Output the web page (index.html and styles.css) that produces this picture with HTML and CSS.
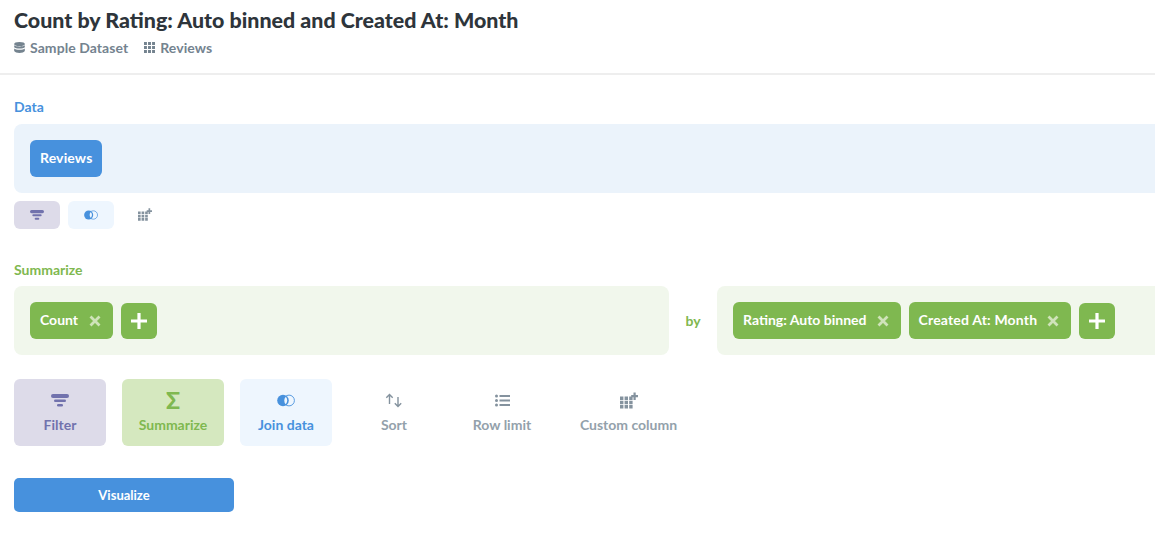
FILE: index.html
```html
<!DOCTYPE html>
<html>
<head>
<meta charset="utf-8">
<title>Count by Rating</title>
<link rel="stylesheet" href="styles.css">
</head>
<body>
<svg class="defs" width="0" height="0">
  <defs>
    <symbol id="funnel" viewBox="0 0 18 14"><rect x="0" y="0" width="18" height="4" rx="2"/><rect x="3" y="5.5" width="12" height="2.6" rx="1.3"/><rect x="6" y="10" width="6" height="2.6" rx="1.3"/></symbol>
    <symbol id="join" viewBox="0 0 18 12"><circle cx="12" cy="6" r="5.400" fill="none" stroke="#4791dd" stroke-width=".9"/><circle cx="6" cy="6" r="5.800" fill="#4791dd"/><path d="M8.800 2.300a5.200 5.200 0 0 0 0 7.400a6 6 0 0 0 0-7.400z" fill="#eef6fe"/></symbol>
    <symbol id="grid" viewBox="0 0 12 12"><path d="M0 0h3.2v3.2H0zM4.4 0h3.2v3.2H4.4zM8.8 0H12v3.2H8.8zM0 4.4h3.2v3.2H0zM4.4 4.4h3.2v3.2H4.4zM8.8 4.4H12v3.2H8.8zM0 8.8h3.2V12H0zM4.4 8.8h3.2V12H4.4zM8.8 8.8H12V12H8.8z"/></symbol>
    <symbol id="gridplus" viewBox="0 0 18 16"><path d="M0 4h3.4v3.4H0zM4.6 4H8v3.4H4.6zM9.2 4h3.4v3.4H9.2zM0 8.3h3.4v3.4H0zM4.6 8.3H8v3.4H4.6zM9.2 8.3h3.4v3.4H9.2zM0 12.6h3.4V16H0zM4.6 12.6H8V16H4.6zM9.2 12.6h3.4V16H9.2z"/><path d="M13.500 0h2.200v2.600h2.300v2.200h-2.300v2.600h-2.200V4.800h-2.300V2.600h2.300z"/></symbol>
    <symbol id="x" viewBox="0 0 12 12"><path d="M1.500 1.500l9 9M10.500 1.500l-9 9" fill="none" stroke="currentColor" stroke-width="2.800"/></symbol>
    <symbol id="plus" viewBox="0 0 16 16"><path d="M6.400 0h3.200v6.400H16v3.200H9.600V16H6.400V9.600H0V6.400h6.400z"/></symbol>
  </defs>
</svg>

<header class="head">
  <h1 class="title">Count by Rating: Auto binned and Created At: Month</h1>
  <div class="crumbs">
    <span class="crumb">
      <svg class="ico-db" viewBox="0 0 12 12"><ellipse cx="6" cy="2.200" rx="5.800" ry="2.200"/><path d="M.2 3.600C1.500 5.300 10.500 5.300 11.800 3.600V5.800C10.500 7.600 1.500 7.600.2 5.800zM.2 7.200C1.500 9 10.500 9 11.800 7.200V9.800C10.500 12.600 1.500 12.600.2 9.800z"/></svg>
      Sample Dataset
    </span>
    <span class="crumb">
      <svg class="ico-grid"><use href="#grid"/></svg>
      Reviews
    </span>
  </div>
</header>

<main class="main">
  <section class="section">
    <div class="label label-blue">Data</div>
    <div class="box box-blue box-bleed">
      <span class="chip chip-blue chip-source">Reviews</span>
    </div>
    <div class="mini-row">
      <span class="mini mini-purple"><svg class="mini-funnel"><use href="#funnel"/></svg></span>
      <span class="mini mini-blue"><svg class="mini-join"><use href="#join"/></svg></span>
      <span class="mini mini-plain"><svg class="mini-grid"><use href="#gridplus"/></svg></span>
    </div>
  </section>

  <section class="section section-sum">
    <div class="label label-green">Summarize</div>
    <div class="sum-row">
      <div class="box box-green box-left">
        <span class="chip chip-green">Count<svg class="x"><use href="#x"/></svg></span>
        <span class="add"><svg class="plus"><use href="#plus"/></svg></span>
      </div>
      <span class="by">by</span>
      <div class="box box-green box-right">
        <span class="chip chip-green">Rating: Auto binned<svg class="x"><use href="#x"/></svg></span>
        <span class="chip chip-green chip-created">Created At: Month<svg class="x"><use href="#x"/></svg></span>
        <span class="add"><svg class="plus"><use href="#plus"/></svg></span>
      </div>
    </div>
  </section>

  <div class="actions">
    <div class="action action-purple action-filter"><svg class="a-funnel"><use href="#funnel"/></svg><span>Filter</span></div>
    <div class="action action-green action-sum"><span class="sigma">Σ</span><span>Summarize</span></div>
    <div class="action action-blue action-join"><svg class="a-join"><use href="#join"/></svg><span>Join data</span></div>
    <div class="action action-plain action-sort">
      <svg class="a-sort" viewBox="0 0 18 15"><path d="M4.500 11V1.500M1.300 4.700l3.200-3.200l3.200 3.200M13 4V13.500M9.800 10.300l3.200 3.200l3.200-3.200" fill="none" stroke="currentColor" stroke-width="1.400"/></svg>
      <span>Sort</span>
    </div>
    <div class="action action-plain action-limit">
      <svg class="a-list" viewBox="0 0 15 12"><circle cx="1.500" cy="1.500" r="1.500"/><circle cx="1.500" cy="6" r="1.500"/><circle cx="1.500" cy="10.500" r="1.500"/><path d="M4.500.6H15v1.800H4.500zM4.500 5.100H15v1.800H4.500zM4.500 9.600H15v1.800H4.500z"/></svg>
      <span>Row limit</span>
    </div>
    <div class="action action-plain action-custom"><svg class="a-gridplus"><use href="#gridplus"/></svg><span>Custom column</span></div>
  </div>

  <button class="visualize">Visualize</button>
</main>
</body>
</html>
```

FILE: styles.css
```css
* { box-sizing: border-box; }
html, body { margin: 0; height: 100%; overflow: hidden; }
body { background: #fff; font-family: Lato, sans-serif; color: #2e353b; }
.defs { position: absolute; }

.head { height: 75px; padding: 8px 14px 0; border-bottom: 2px solid #eeeeee; }
.title { margin: 0; font-size: 21.4px; line-height: 24px; font-weight: 900; color: #2e353b; }
.crumbs { display: flex; gap: 16px; margin-top: 7px; font-size: 14px; line-height: 17px; font-weight: 700; letter-spacing: .07px; color: #74838f; }
.crumb { display: inline-flex; align-items: center; gap: 5px; }
.ico-db, .ico-grid { width: 11px; height: 11px; fill: #74838f; }

.main { padding: 23px 14px 0; }
.label { font-size: 14px; line-height: 17px; font-weight: 700; }
.label-blue { color: #4791dd; margin-bottom: 9px; }
.label-green { color: #7fb850; margin-bottom: 8px; }

.box { display: flex; gap: 8px; height: 69px; padding: 16px; border-radius: 8px; align-items: flex-start; }
.box-blue { background: #ebf3fb; }
.box-green { background: #f1f7ec; }
.box-bleed { margin-right: -40px; }

.chip { display: inline-flex; align-items: center; height: 37px; padding: 0 12px 2px 10px; border-radius: 6px; color: #fff; font-size: 14px; font-weight: 700; white-space: nowrap; }
.chip-blue { background: #4791dd; }
.chip-green { background: #7fb850; }
.chip-source { padding-right: 10px; letter-spacing: .14px; }
.chip-created { letter-spacing: .18px; }
.x { width: 12px; height: 12px; margin-left: 11px; margin-top: 2px; color: #cfe3b9; }
.box-right .x { margin-left: 10px; }
.add { display: flex; align-items: center; justify-content: center; width: 36px; height: 36px; margin-top: 1px; border-radius: 6px; background: #7fb850; }
.plus { width: 16px; height: 16px; fill: #fff; }

.mini-row { display: flex; gap: 8px; margin-top: 8px; }
.mini { display: flex; align-items: center; justify-content: center; width: 46px; height: 28px; border-radius: 6px; }
.mini-purple { background: #dddbe9; }
.mini-blue { background: #eef6fe; }
.mini-funnel { width: 14px; height: 11px; fill: #7172ad; }
.mini-join { width: 14px; height: 10px; }
.mini-grid { width: 14px; height: 13px; fill: #84929e; margin-bottom: 2px; }

.section-sum { margin-top: 32px; }
.sum-row { display: flex; align-items: stretch; margin-right: -40px; }
.box-left { width: 655px; flex: none; }
.by { width: 48px; flex: none; text-align: center; align-self: center; font-size: 14px; font-weight: 700; color: #7fb850; }
.box-right { flex: 1; }

.actions { display: flex; gap: 16px; margin-top: 24px; }
.action { display: flex; flex-direction: column; align-items: center; height: 67px; padding-top: 12px; border-radius: 6px; font-size: 14px; font-weight: 700; line-height: 17px; }
.action > svg, .sigma { display: block; height: 19px; flex: none; margin-bottom: 6px; }
.action-filter { width: 92px; }
.action-sum { width: 102px; }
.action-join { width: 92px; }
.action-sort { width: 92px; }
.action-limit { width: 92px; }
.action-custom { width: 129px; }
.action-purple { background: #dddbe9; color: #7172ad; }
.action-green { background: #d5e8bf; color: #7fb850; }
.action-blue { background: #eef6fe; color: #4791dd; }
.action-plain { color: #93a1ab; }
.a-funnel { width: 18px; fill: #7172ad; padding: 3px 0 2px; }
.a-join { width: 18px; padding: 3px 0; }
.a-sort { width: 18px; padding: 2px 0; color: #84929e; }
.a-list { width: 15px; fill: #84929e; padding: 3px 0; }
.a-gridplus { width: 18px; fill: #84929e; padding: 1px 0; }
.sigma { font-size: 23px; line-height: 19px; font-weight: 900; }

.visualize { display: block; width: 220px; height: 34px; margin-top: 32px; padding: 0; border: 0; border-radius: 5px; background: #4791dd; color: #fff; font: 700 13px Lato, sans-serif; }
```
